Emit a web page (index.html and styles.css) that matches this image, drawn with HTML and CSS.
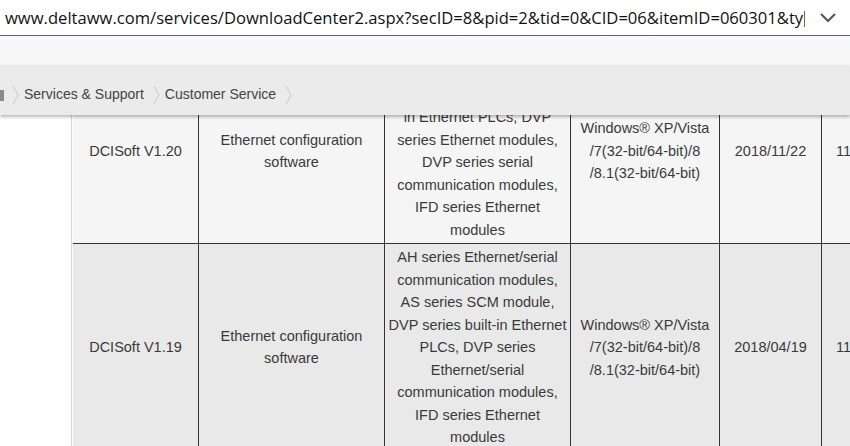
FILE: index.html
```html
<!DOCTYPE html>
<html>
<head>
<meta charset="utf-8">
<link rel="stylesheet" href="styles.css">
</head>
<body>
<div class="addr">
  <span class="url">www.deltaww.com/services/DownloadCenter2.aspx?secID=8&amp;pid=2&amp;tid=0&amp;CID=06&amp;itemID=060301&amp;ty</span><span class="caret"></span>
  <svg class="drop" width="18" height="12" viewBox="0 0 18 12"><polyline points="2,3 9,10 16,3" fill="none" stroke="#555" stroke-width="2"/></svg>
</div>
<div class="stage">
  <div class="topbar">
    <div class="band"></div>
    <nav class="crumbs">
      <span class="home"></span>
      <svg class="sep" width="8" height="20" viewBox="0 0 8 20"><polyline points="1,1 6,10 1,19" fill="none" stroke="#c9c9c9" stroke-width="1"/></svg>
      <span class="crumb">Services &amp; Support</span>
      <svg class="sep" width="8" height="20" viewBox="0 0 8 20"><polyline points="1,1 6,10 1,19" fill="none" stroke="#c9c9c9" stroke-width="1"/></svg>
      <span class="crumb">Customer Service</span>
      <svg class="sep" width="8" height="20" viewBox="0 0 8 20"><polyline points="1,1 6,10 1,19" fill="none" stroke="#c9c9c9" stroke-width="1"/></svg>
    </nav>
  </div>
  <div class="tablewrap">
    <table class="dl">
      <colgroup>
        <col class="c1"><col class="c2"><col class="c3"><col class="c4"><col class="c5"><col class="c6">
      </colgroup>
      <tr class="odd">
        <td>DCISoft V1.20</td>
        <td>Ethernet configuration software</td>
        <td>AH series Ethernet modules, DVP series built-<br>in Ethernet PLCs, DVP series Ethernet modules, DVP series serial communication modules, IFD series Ethernet modules</td>
        <td>Windows® XP/Vista /7(32-bit/64-bit)/8 /8.1(32-bit/64-bit)</td>
        <td>2018/11/22</td>
        <td>11.6 MB</td>
      </tr>
      <tr class="even">
        <td>DCISoft V1.19</td>
        <td>Ethernet configuration software</td>
        <td>AH series Ethernet/serial communication modules, AS series SCM module, DVP series built-in Ethernet PLCs, DVP series Ethernet/serial communication modules, IFD series Ethernet modules</td>
        <td>Windows® XP/Vista /7(32-bit/64-bit)/8 /8.1(32-bit/64-bit)</td>
        <td>2018/04/19</td>
        <td>11.5 MB</td>
      </tr>
    </table>
  </div>
</div>
</body>
</html>
```
FILE: styles.css
```css
html, body {
  margin: 0;
  padding: 0;
  background: #fff;
}
body {
  width: 850px;
  height: 446px;
  overflow: hidden;
  display: flex;
  flex-direction: column;
}
.addr {
  height: 35px;
  border-bottom: 1px solid #2f6fa5;
  display: flex;
  align-items: center;
  padding-left: 5px;
  box-sizing: content-box;
  position: relative;
  flex: none;
}
.url {
  font-family: "Open Sans", "Noto Sans", sans-serif;
  font-size: 16.6px;
  color: #111;
  white-space: nowrap;
  letter-spacing: 0;
}
.caret {
  display: inline-block;
  width: 1px;
  height: 16px;
  background: #a0642a;
  margin-left: 1px;
  margin-top: 3px;
}
.drop {
  position: absolute;
  left: 819px;
  top: 11px;
}
.stage {
  position: relative;
  flex: 1;
  overflow: hidden;
}
.topbar {
  position: absolute;
  top: 0;
  left: 0;
  right: 0;
  z-index: 2;
}
.band {
  height: 29px;
  background: #f7f7f7;
}
.crumbs {
  height: 50px;
  box-sizing: border-box;
  padding-top: 8px;
  background: #ebebeb;
  box-shadow: 0 2px 3px rgba(0, 0, 0, 0.28);
  display: flex;
  align-items: center;
  font-family: "Liberation Sans", Arial, sans-serif;
  font-size: 14px;
  color: #444;
}
.home {
  width: 4px;
  height: 11px;
  background: #8a8a8a;
  margin-right: 8px;
  margin-top: 2px;
}
.sep {
  flex: none;
  margin-top: 1px;
}
.crumb {
  margin: 0 9px 0 4px;
}
.tablewrap {
  margin-left: 71px;
  margin-top: 23px;
  border-left: 1px solid #d6d6d6;
  padding-left: 1px;
}
.dl {
  border-collapse: separate;
  border-spacing: 0;
  table-layout: fixed;
  width: 831px;
  font-family: "Liberation Sans", Arial, sans-serif;
  font-size: 14.5px;
  line-height: 22.5px;
  color: #3a3a3a;
}
.c1 { width: 126px; }
.c2 { width: 186px; }
.c3 { width: 186px; }
.c4 { width: 149px; }
.c5 { width: 102px; }
.c6 { width: 82px; }
.dl td {
  box-sizing: border-box;
  border-right: 1px solid #333;
  border-bottom: 1px solid #333;
  padding: 2px 3px;
  text-align: center;
  vertical-align: middle;
  white-space: normal;
}
.dl td:last-child {
  white-space: nowrap;
}
.odd td { background: #f5f5f5; }
.even td { background: #e9e9e9; }
```
